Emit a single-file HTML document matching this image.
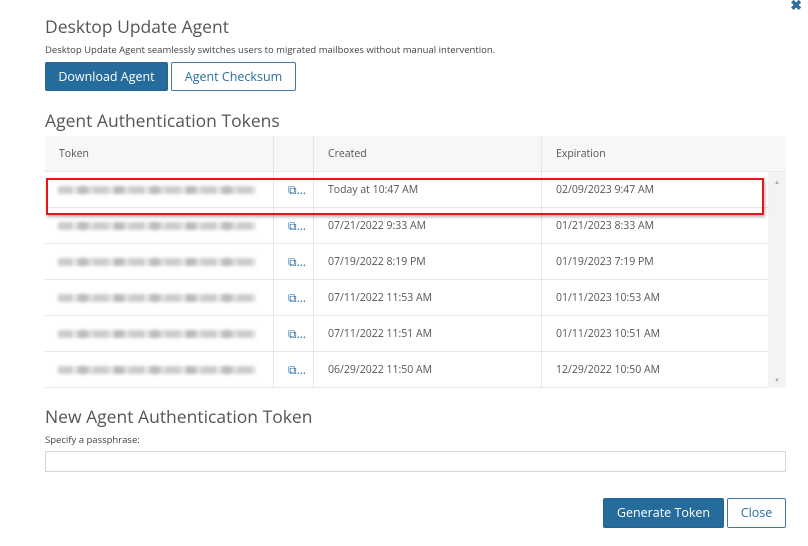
<!DOCTYPE html>
<html><head><meta charset="utf-8"><style>
*{margin:0;padding:0;box-sizing:border-box}
body{width:808px;height:546px;background:#fff;font-family:"Open Sans","Liberation Sans",sans-serif;color:#444;position:relative;overflow:hidden}
.a{position:absolute}
h1{position:absolute;font-weight:normal;color:#555;font-size:17.5px;left:45px}
.btn{position:absolute;font-size:12.5px;text-align:center;border-radius:2px}
.p{background:#256c9c;color:#fff;border:1px solid #236590}
.s{background:#fff;color:#2a6e9d;border:1px solid #3e7aa6}
.row{position:absolute;left:45px;width:723px;height:36px;border-bottom:1px solid #e6e6e6;font-size:10.5px;color:#555}
.row div{position:absolute;top:0;height:36px;line-height:36px}
.tk{left:13px;top:14px!important;height:8px!important;width:198px;background:repeating-linear-gradient(90deg,#ccc 0 14px,#e2e2e2 14px 20px,#bbb 20px 30px,#ddd 30px 36px);filter:blur(1.5px)}
.ic{left:243px;color:#2a6e9d;font-size:12px}
.vl{position:absolute;top:136px;height:252px;width:1px;background:#e6e6e6}
</style></head><body>
<div class="a" style="right:6px;top:-4px;color:#2a6e9d;font-size:14px;font-weight:bold">✖</div>
<h1 style="top:15px">Desktop Update Agent</h1>
<div class="a" style="left:45px;top:43px;font-size:9.5px;color:#444">Desktop Update Agent seamlessly switches users to migrated mailboxes without manual intervention.</div>
<div class="btn p" style="left:45px;top:62px;width:123px;height:29px;line-height:27px">Download Agent</div>
<div class="btn s" style="left:171px;top:62px;width:125px;height:29px;line-height:27px">Agent Checksum</div>
<h1 style="top:109px">Agent Authentication Tokens</h1>
<div class="a" style="left:45px;top:136px;width:741px;height:36px;background:#f7f7f7;border-bottom:1px solid #e8e8e8;font-size:10.5px;color:#555">
<span class="a" style="left:14px;top:11px">Token</span><span class="a" style="left:283px;top:11px">Created</span><span class="a" style="left:511px;top:11px">Expiration</span></div>
<div class="vl" style="left:273px"></div><div class="vl" style="left:313px"></div><div class="vl" style="left:541px"></div>
<div class="a" style="left:768px;top:172px;width:18px;height:216px;background:#f3f3f3"></div>
<div class="a" style="left:774px;top:178px;font-size:6px;color:#aaa">▲</div>
<div class="a" style="left:774px;top:376px;font-size:6px;color:#aaa">▼</div>
<div class="row" style="top:172px"><div class="tk"></div><div class="ic">⧉…</div><div style="left:283px">Today at 10:47 AM</div><div style="left:511px">02/09/2023 9:47 AM</div></div>
<div class="row" style="top:208px"><div class="tk"></div><div class="ic">⧉…</div><div style="left:283px">07/21/2022 9:33 AM</div><div style="left:511px">01/21/2023 8:33 AM</div></div>
<div class="row" style="top:244px"><div class="tk"></div><div class="ic">⧉…</div><div style="left:283px">07/19/2022 8:19 PM</div><div style="left:511px">01/19/2023 7:19 PM</div></div>
<div class="row" style="top:280px"><div class="tk"></div><div class="ic">⧉…</div><div style="left:283px">07/11/2022 11:53 AM</div><div style="left:511px">01/11/2023 10:53 AM</div></div>
<div class="row" style="top:316px"><div class="tk"></div><div class="ic">⧉…</div><div style="left:283px">07/11/2022 11:51 AM</div><div style="left:511px">01/11/2023 10:51 AM</div></div>
<div class="row" style="top:352px"><div class="tk"></div><div class="ic">⧉…</div><div style="left:283px">06/29/2022 11:50 AM</div><div style="left:511px">12/29/2022 10:50 AM</div></div>
<div class="a" style="left:46px;top:178px;width:718px;height:37px;border:2px solid #e8161b;box-shadow:1px 2px 3px rgba(0,0,0,.3)"></div>
<h1 style="top:405px">New Agent Authentication Token</h1>
<div class="a" style="left:45px;top:433px;font-size:9.5px;color:#444">Specify a passphrase:</div>
<div class="a" style="left:45px;top:451px;width:741px;height:21px;border:1px solid #d6d6d6"></div>
<div class="btn p" style="left:603px;top:498px;width:121px;height:30px;line-height:28px">Generate Token</div>
<div class="btn s" style="left:727px;top:498px;width:59px;height:30px;line-height:28px">Close</div>
</body></html>
